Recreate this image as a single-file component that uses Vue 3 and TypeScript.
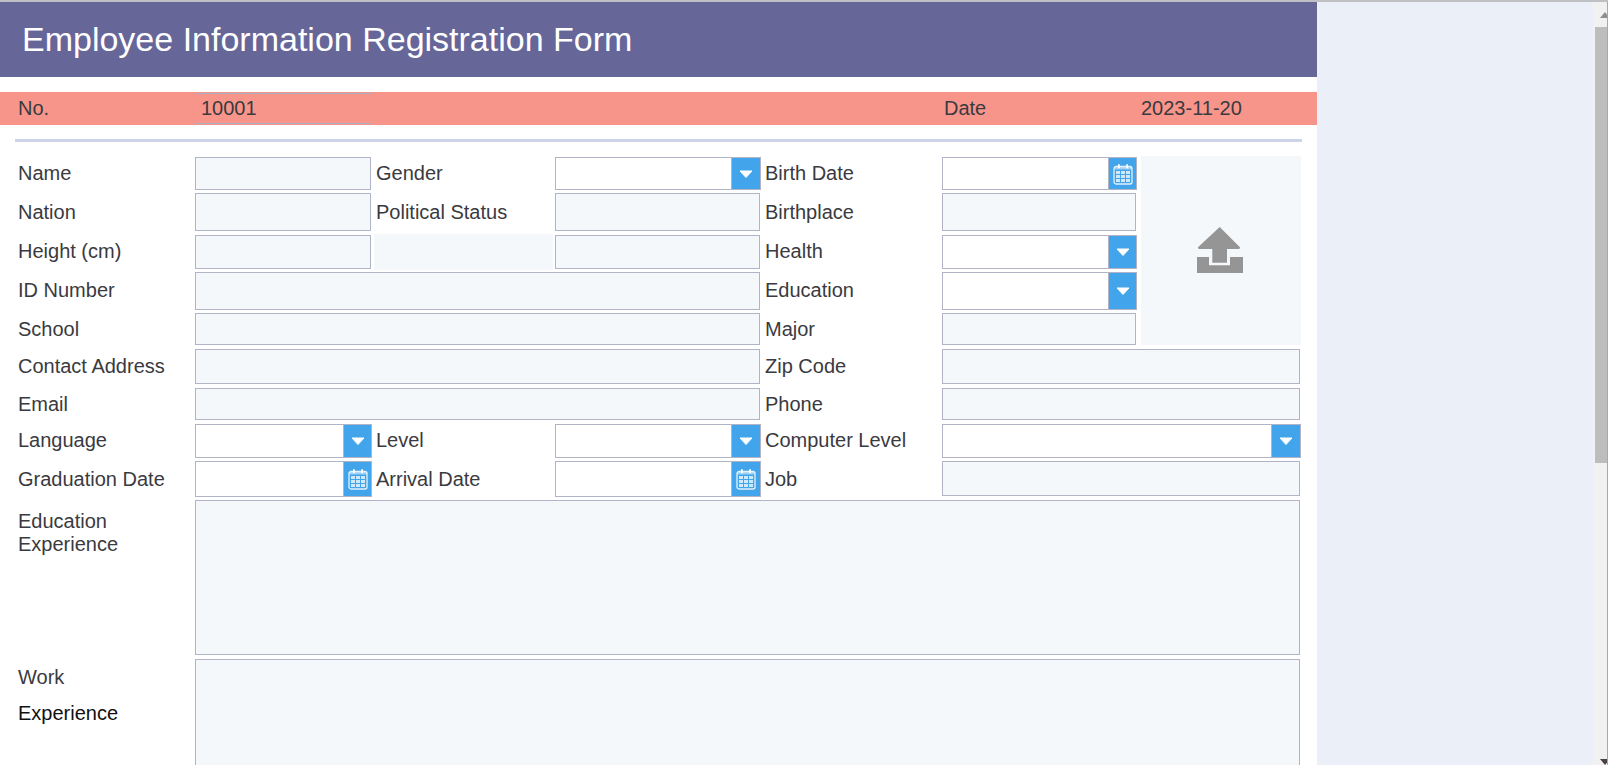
<script setup lang="ts">
const title: string = 'Employee Information Registration Form'
</script>

<template>
  <div class="page">
    <div class="top-line"></div>
    <div class="desk">
      <main class="sheet">
        <h1 class="title">{{ title }}</h1>
        <div class="meta">
          <span class="meta-label">No.</span>
          <span class="meta-box">10001</span>
          <span></span>
          <span class="meta-date">Date</span>
          <span class="meta-value">2023-11-20</span>
        </div>
        <div class="rule"></div>

        <form class="grid" @submit.prevent>
          <label class="lb">Name</label>
          <input class="in" />
          <label class="lb lb2">Gender</label>
          <div class="pick b29"><span class="pick-val"></span><span class="btn"><svg class="tri" viewBox="0 0 14 8"><path d="M1 1h12L7 7.500z" fill="#fff" stroke="#fff" stroke-linejoin="round" /></svg></span></div>
          <label class="lb lb3">Birth Date</label>
          <div class="pick narrow"><span class="pick-val"></span><span class="btn"><svg class="cal" viewBox="0 0 20 22"><path d="M3 3.500h14a2 2 0 0 1 2 2V19a2 2 0 0 1-2 2H3a2 2 0 0 1-2-2V5.500a2 2 0 0 1 2-2z" fill="none" stroke="#fff" stroke-width="1.300" opacity=".85" /><path d="M1.500 4h17v2.500h-17z" fill="#fff" opacity=".5" /><rect x="5" y="1" width="1.800" height="4.500" rx=".9" fill="#fff" /><rect x="13.200" y="1" width="1.800" height="4.500" rx=".9" fill="#fff" /><path d="M3 8h4v3H3zM8 8h4v3H8zM13 8h4v3h-4zM3 12h4v3H3zM8 12h4v3H8zM13 12h4v3h-4zM3 16h4v3H3zM8 16h4v3H8zM13 16h4v3h-4z" fill="#fff" opacity=".75" /></svg></span></div>
          <div class="photo">
            <svg class="upload" viewBox="0 0 46 46"><path d="M22.700 0 42.700 20a1.200 1.200 0 0 1-.9 2H30v13.700H15.300V22H2.200a1.200 1.200 0 0 1-.9-2z" fill="#959595" /><path d="M0 30h12v8.300h21V30h13v16H0z" fill="#959595" /></svg>
          </div>

          <label class="lb">Nation</label>
          <input class="in gap4" />
          <label class="lb lb2">Political Status</label>
          <input class="in gap4" />
          <label class="lb lb3">Birthplace</label>
          <input class="in gap4 narrow" />

          <label class="lb lift">Height (cm)</label>
          <input class="in" />
          <div class="blank"></div>
          <input class="in" />
          <label class="lb lb3 lift">Health</label>
          <div class="pick narrow"><span class="pick-val"></span><span class="btn"><svg class="tri" viewBox="0 0 14 8"><path d="M1 1h12L7 7.500z" fill="#fff" stroke="#fff" stroke-linejoin="round" /></svg></span></div>

          <label class="lb lift">ID Number</label>
          <input class="in wide" />
          <label class="lb lb3 lift">Education</label>
          <div class="pick narrow"><span class="pick-val"></span><span class="btn"><svg class="tri" viewBox="0 0 14 8"><path d="M1 1h12L7 7.500z" fill="#fff" stroke="#fff" stroke-linejoin="round" /></svg></span></div>

          <label class="lb">School</label>
          <input class="in wide gap4" />
          <label class="lb lb3">Major</label>
          <input class="in gap4 narrow" />

          <label class="lb lift">Contact Address</label>
          <input class="in wide gap4" />
          <label class="lb lb3 lift">Zip Code</label>
          <input class="in wider gap4" />

          <label class="lb">Email</label>
          <input class="in wide gap4" />
          <label class="lb lb3">Phone</label>
          <input class="in wider gap4" />

          <label class="lb lift">Language</label>
          <div class="pick"><span class="pick-val"></span><span class="btn"><svg class="tri" viewBox="0 0 14 8"><path d="M1 1h12L7 7.500z" fill="#fff" stroke="#fff" stroke-linejoin="round" /></svg></span></div>
          <label class="lb lb2 lift">Level</label>
          <div class="pick b29"><span class="pick-val"></span><span class="btn"><svg class="tri" viewBox="0 0 14 8"><path d="M1 1h12L7 7.500z" fill="#fff" stroke="#fff" stroke-linejoin="round" /></svg></span></div>
          <label class="lb lb3 lift">Computer Level</label>
          <div class="pick wider b29"><span class="pick-val"></span><span class="btn"><svg class="tri" viewBox="0 0 14 8"><path d="M1 1h12L7 7.500z" fill="#fff" stroke="#fff" stroke-linejoin="round" /></svg></span></div>

          <label class="lb">Graduation Date</label>
          <div class="pick"><span class="pick-val"></span><span class="btn"><svg class="cal" viewBox="0 0 20 22"><path d="M3 3.500h14a2 2 0 0 1 2 2V19a2 2 0 0 1-2 2H3a2 2 0 0 1-2-2V5.500a2 2 0 0 1 2-2z" fill="none" stroke="#fff" stroke-width="1.300" opacity=".85" /><path d="M1.500 4h17v2.500h-17z" fill="#fff" opacity=".5" /><rect x="5" y="1" width="1.800" height="4.500" rx=".9" fill="#fff" /><rect x="13.200" y="1" width="1.800" height="4.500" rx=".9" fill="#fff" /><path d="M3 8h4v3H3zM8 8h4v3H8zM13 8h4v3h-4zM3 12h4v3H3zM8 12h4v3H8zM13 12h4v3h-4zM3 16h4v3H3zM8 16h4v3H8zM13 16h4v3h-4z" fill="#fff" opacity=".75" /></svg></span></div>
          <label class="lb lb2">Arrival Date</label>
          <div class="pick b29"><span class="pick-val"></span><span class="btn"><svg class="cal" viewBox="0 0 20 22"><path d="M3 3.500h14a2 2 0 0 1 2 2V19a2 2 0 0 1-2 2H3a2 2 0 0 1-2-2V5.500a2 2 0 0 1 2-2z" fill="none" stroke="#fff" stroke-width="1.300" opacity=".85" /><path d="M1.500 4h17v2.500h-17z" fill="#fff" opacity=".5" /><rect x="5" y="1" width="1.800" height="4.500" rx=".9" fill="#fff" /><rect x="13.200" y="1" width="1.800" height="4.500" rx=".9" fill="#fff" /><path d="M3 8h4v3H3zM8 8h4v3H8zM13 8h4v3h-4zM3 12h4v3H3zM8 12h4v3H8zM13 12h4v3h-4zM3 16h4v3H3zM8 16h4v3H8zM13 16h4v3h-4z" fill="#fff" opacity=".75" /></svg></span></div>
          <label class="lb lb3">Job</label>
          <input class="in wider gap4" />

          <label class="lb lb-edu">Education<br />Experience</label>
          <textarea class="in full gap4"></textarea>

          <label class="lb lb-work"><span>Work</span><br /><span class="dark">Experience</span></label>
          <textarea class="in full"></textarea>
        </form>
      </main>
      <div class="side"></div>
      <div class="scrollbar">
        <svg class="arrow up" viewBox="0 0 10 6"><path d="M0 6 5 0l5 6z" fill="#8e8e95" /></svg>
        <div class="thumb"></div>
        <svg class="arrow down" viewBox="0 0 10 6"><path d="M0 0h10L5 6z" fill="#4b4044" /></svg>
      </div>
    </div>
  </div>
</template>

<style scoped>
.page {
  height: 765px;
  display: flex;
  flex-direction: column;
  overflow: hidden;
  font-family: "Liberation Sans", Arial, sans-serif;
  font-size: 20px;
  color: #3a3a40;
}
.top-line {
  height: 2px;
  flex: none;
  background: #bfc0c4;
}
.desk {
  flex: 1;
  min-height: 0;
  display: flex;
}
.sheet {
  width: 1317px;
  flex: none;
  background: #fff;
  overflow: hidden;
}
.side {
  flex: 1;
  background: #ebeff8;
}
.title {
  margin: 0 0 15px;
  height: 75px;
  padding-left: 22px;
  display: flex;
  align-items: center;
  background: #666699;
  color: #fff;
  font-size: 34px;
  font-weight: 400;
}
.meta {
  height: 33px;
  display: grid;
  grid-template-columns: 195px 177px 570px 197px 1fr;
  align-items: center;
  background: #f8958a;
}
.meta-label {
  padding-left: 18px;
}
.meta-box {
  box-sizing: border-box;
  height: 31px;
  margin-top: -1px;
  padding-left: 5px;
  border: 1px solid #a9b0c6;
  line-height: 29px;
}
.meta-date {
  padding-left: 2px;
}
.meta-value {
  padding-left: 2px;
}
.rule {
  height: 3px;
  margin: 14px 15px 0;
  background: #cdd3e8;
}
.grid {
  margin: 15px 0 0 15px;
  display: grid;
  grid-template-columns: 180px 177px 183px 206px 181px 197px 163px;
  grid-template-rows: 33px 39px 34px 38px 33px 36px 33px 34px 36px 156px 160px;
  row-gap: 3px;
}
.lb {
  padding-left: 3px;
  align-self: center;
  white-space: nowrap;
}
.lb2 {
  padding-left: 4px;
}
.lb3 {
  padding-left: 4px;
}
.lift {
  margin-bottom: 2px;
}
.lb-edu {
  align-self: start;
  padding-top: 10px;
  line-height: 23px;
}
.lb-work {
  align-self: start;
  line-height: 36px;
}
.dark {
  color: #111;
}
.in {
  box-sizing: border-box;
  display: block;
  width: calc(100% - 1px);
  min-width: 0;
  height: auto;
  margin: 0;
  padding: 0 6px;
  border: 1px solid #b0b4c6;
  border-radius: 0;
  outline: none;
  resize: none;
  background: #f4f8fb;
}
.gap4 {
  margin-bottom: 1px;
}
.wide {
  grid-column: span 3;
}
.wider {
  grid-column: span 2;
  margin-right: 1px;
}
.in.wider {
  width: calc(100% - 2px);
  margin-right: 0;
}
.full {
  grid-column: span 6;
  width: calc(100% - 2px);
}
.pick {
  box-sizing: border-box;
  display: flex;
  min-width: 0;
  border: 1px solid #b0b4c6;
  background: #fff;
}
.narrow {
  margin-right: 2px;
}
.in.narrow {
  width: calc(100% - 3px);
  margin-right: 0;
}
.pick-val {
  flex: 1;
  min-width: 0;
}
.btn {
  flex: none;
  box-sizing: border-box;
  width: 28px;
  display: flex;
  align-items: center;
  justify-content: center;
  border-left: 1px solid #b0b4c6;
  background: #42a5ec;
}
.b29 .btn {
  width: 29px;
}
.tri {
  width: 14px;
  height: 8px;
}
.cal {
  width: 20px;
  height: 22px;
}
.blank {
  margin: -1px 2px;
  background: #f4f8fb;
}
.photo {
  grid-row: 1 / span 5;
  grid-column: 7;
  margin: -1px 1px 1px 2px;
  display: flex;
  align-items: center;
  justify-content: center;
  background: #f4f8fb;
}
.upload {
  width: 46px;
  height: 46px;
  margin-left: -2px;
  margin-top: -2px;
}
.scrollbar {
  width: 15px;
  flex: none;
  display: flex;
  flex-direction: column;
  overflow: hidden;
  box-sizing: border-box;
  border-right: 1px solid #a9a9a9;
  background: #f1f1f1;
}
.arrow {
  flex: none;
  width: 10px;
  height: 6px;
  margin-left: 7px;
}
.up {
  margin-top: 10px;
}
.thumb {
  flex: none;
  height: 436px;
  margin: 9px 0 0 2px;
  background: #bdbdbd;
}
.down {
  margin-top: auto;
}
</style>

<style>
html,
body {
  margin: 0;
  overflow: hidden;
  background: #ebeff8;
}
</style>
